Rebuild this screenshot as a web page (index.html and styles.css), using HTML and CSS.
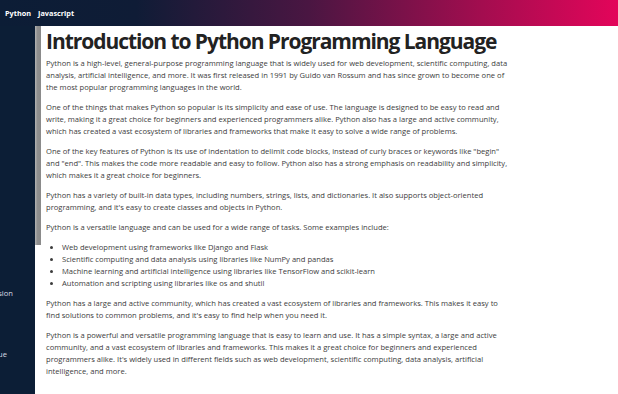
FILE: index.html
```html
<!DOCTYPE html>
<html lang="en">
<head>
<meta charset="utf-8">
<title>Introduction to Python Programming Language</title>
<link rel="stylesheet" href="styles.css">
</head>
<body>
<header class="topbar">
  <nav class="nav">
    <a class="nav-link" href="#">Python</a>
    <a class="nav-link" href="#">Javascript</a>
  </nav>
</header>
<div class="layout">
  <aside class="sidebar">
    <div class="side-item side-item-1">Python Version</div>
    <div class="side-item side-item-2">Python Value</div>
  </aside>
  <div class="rail"></div>
  <main class="content">
    <h1 class="title">Introduction to Python Programming Language</h1>
    <p>Python is a high-level, general-purpose programming language that is widely used for web development, scientific computing, data analysis, artificial intelligence, and more. It was first released in 1991 by Guido van Rossum and has since grown to become one of the most popular programming languages in the world.</p>
    <p>One of the things that makes Python so popular is its simplicity and ease of use. The language is designed to be easy to read and write, making it a great choice for beginners and experienced programmers alike. Python also has a large and active community, which has created a vast ecosystem of libraries and frameworks that make it easy to solve a wide range of problems.</p>
    <p>One of the key features of Python is its use of indentation to delimit code blocks, instead of curly braces or keywords like "begin" and "end". This makes the code more readable and easy to follow. Python also has a strong emphasis on readability and simplicity, which makes it a great choice for beginners.</p>
    <p>Python has a variety of built-in data types, including numbers, strings, lists, and dictionaries. It also supports object-oriented programming, and it's easy to create classes and objects in Python.</p>
    <p>Python is a versatile language and can be used for a wide range of tasks. Some examples include:</p>
    <ul class="list">
      <li>Web development using frameworks like Django and Flask</li>
      <li>Scientific computing and data analysis using libraries like NumPy and pandas</li>
      <li>Machine learning and artificial intelligence using libraries like TensorFlow and scikit-learn</li>
      <li>Automation and scripting using libraries like os and shutil</li>
    </ul>
    <p>Python has a large and active community, which has created a vast ecosystem of libraries and frameworks. This makes it easy to find solutions to common problems, and it's easy to find help when you need it.</p>
    <p>Python is a powerful and versatile programming language that is easy to learn and use. It has a simple syntax, a large and active community, and a vast ecosystem of libraries and frameworks. This makes it a great choice for beginners and experienced programmers alike. It's widely used in different fields such as web development, scientific computing, data analysis, artificial intelligence, and more.</p>
  </main>
</div>
</body>
</html>
```
FILE: styles.css
```css
* { box-sizing: border-box; }
html, body { margin: 0; padding: 0; }
body {
  width: 618px;
  height: 394px;
  overflow: hidden;
  font-family: "Open Sans", "Noto Sans", sans-serif;
  background: #ffffff;
  color: #3c3c3c;
}
.topbar {
  height: 26px;
  background: linear-gradient(to right, #0c1d36 0%, #0f1c36 22%, #4a1642 50%, #a30d4f 78%, #e3055a 100%);
  display: flex;
  align-items: center;
  padding-left: 5px;
}
.nav { display: flex; gap: 7px; }
.nav-link {
  color: #ffffff;
  font-weight: 700;
  font-size: 7.3px;
  text-decoration: none;
}
.layout {
  display: flex;
  height: 368px;
}
.sidebar {
  width: 35px;
  flex: none;
  background: #0c1e36;
  overflow: hidden;
}
.side-item {
  display: flex;
  justify-content: flex-end;
  white-space: nowrap;
  color: #d8dce4;
  font-size: 7.6px;
  line-height: 12px;
}
.side-item-1 { margin-top: 261px; padding-right: 22px; }
.side-item-2 { margin-top: 49px; padding-right: 28px; }
.rail {
  width: 6px;
  flex: none;
  height: 219px;
  background: linear-gradient(to right, #b4b4b4 0%, #8f8f8f 40%, #8a8a8a 100%);
}
.content {
  padding-left: 5px;
  width: 472px;
  font-size: 7.6px;
  line-height: 12px;
}
.title {
  margin: 2px 0 3px 0;
  font-size: 21px;
  line-height: 26px;
  letter-spacing: -1.05px;
  font-weight: 700;
  color: #222222;
  white-space: nowrap;
}
.content p { margin: 0 0 8px 0; }
.list { margin: 0 0 8px 0; padding-left: 16px; }
```
